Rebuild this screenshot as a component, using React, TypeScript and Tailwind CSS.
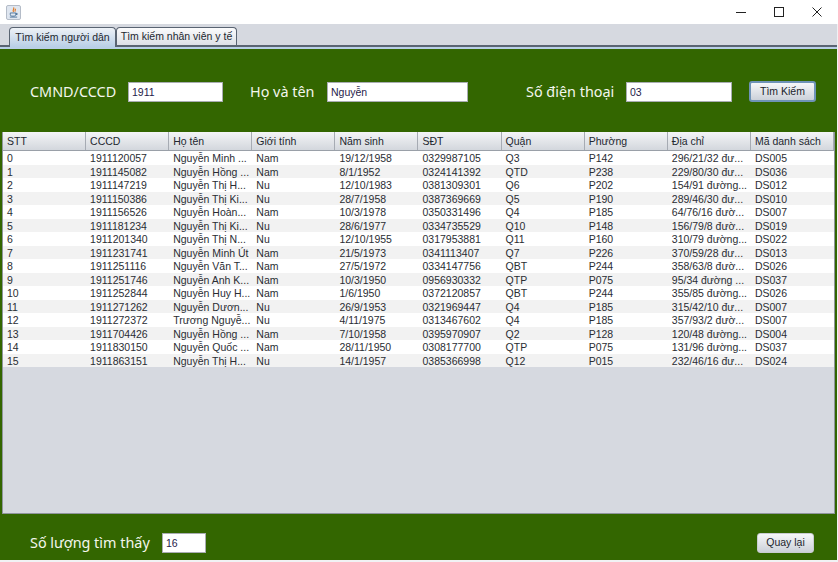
const headers = ["STT","CCCD","Họ tên","Giới tính","Năm sinh","SĐT","Quận","Phường","Địa chỉ","Mã danh sách"];
const rows = [
["0","1911120057","Nguyễn Minh ...","Nam","19/12/1958","0329987105","Q3","P142","296/21/32 đư...","DS005"],
["1","1911145082","Nguyễn Hồng ...","Nam","8/1/1952","0324141392","QTD","P238","229/80/30 đư...","DS036"],
["2","1911147219","Nguyễn Thị H...","Nu","12/10/1983","0381309301","Q6","P202","154/91 đường...","DS012"],
["3","1911150386","Nguyễn Thị Ki...","Nu","28/7/1958","0387369669","Q5","P190","289/46/30 đư...","DS010"],
["4","1911156526","Nguyễn Hoàn...","Nam","10/3/1978","0350331496","Q4","P185","64/76/16 đườ...","DS007"],
["5","1911181234","Nguyễn Thị Ki...","Nu","28/6/1977","0334735529","Q10","P148","156/79/8 đườ...","DS019"],
["6","1911201340","Nguyễn Thị N...","Nu","12/10/1955","0317953881","Q11","P160","310/79 đường...","DS022"],
["7","1911231741","Nguyễn Minh Út","Nam","21/5/1973","0341113407","Q7","P226","370/59/28 đư...","DS013"],
["8","1911251116","Nguyễn Văn T...","Nam","27/5/1972","0334147756","QBT","P244","358/63/8 đườ...","DS026"],
["9","1911251746","Nguyễn Anh K...","Nam","10/3/1950","0956930332","QTP","P075","95/34 đường ...","DS037"],
["10","1911252844","Nguyễn Huy H...","Nam","1/6/1950","0372120857","QBT","P244","355/85 đường...","DS026"],
["11","1911271262","Nguyễn Dươn...","Nu","26/9/1953","0321969447","Q4","P185","315/42/10 đư...","DS007"],
["12","1911272372","Trương Nguyễ...","Nu","4/11/1975","0313467602","Q4","P185","357/93/2 đườ...","DS007"],
["13","1911704426","Nguyễn Hồng ...","Nam","7/10/1958","0395970907","Q2","P128","120/48 đường...","DS004"],
["14","1911830150","Nguyễn Quốc ...","Nam","28/11/1950","0308177700","QTP","P075","131/96 đường...","DS037"],
["15","1911863151","Nguyễn Thị H...","Nu","14/1/1957","0385366998","Q12","P015","232/46/16 đư...","DS024"],
];

const label = "font-['Noto_Sans',sans-serif] text-[14.4px] leading-5 text-[#f4f7ee] whitespace-nowrap";
const input = "h-[20px] bg-white border border-[#a9adb3] px-[3px] font-['Liberation_Sans',sans-serif] text-[10.5px] leading-[18px] text-[#26224a]";
const btn = "font-['Liberation_Sans',sans-serif] text-[10.5px] text-[#20242c] bg-gradient-to-b from-[#f6f7f9] to-[#ccd1d9] rounded-[3px] flex items-center justify-center";

export default function App() {
  return (
    <div className="w-[838px] h-[562px] bg-[#f1f2f4] overflow-hidden flex flex-col font-['Liberation_Sans',sans-serif]">
      <div className="h-[24px] bg-white flex items-center justify-between shrink-0">
        <div className="ml-[6px] w-[15px] h-[15px] bg-[#dfe6f0] border border-[#b4bcc8] rounded-[2px] flex items-center justify-center">
          <svg width="11" height="11" viewBox="0 0 12 12">
            <path d="M6 .500c1.500 1.500-1.500 2.500 0 5M8 2c.5 1-1 2 0 3" stroke="#e07a28" strokeWidth="1.300" fill="none" />
            <path d="M2.500 6.500h6v2c0 1-1 1.500-3 1.500s-3-.5-3-1.500zM8.500 7h1.500v1.200h-1.500M2 11h8" stroke="#4a7299" strokeWidth="1" fill="none" />
          </svg>
        </div>
        <div className="flex items-center mr-[2px]">
          <div className="w-[38px] h-[24px] flex items-center justify-center">
            <svg width="10" height="10" viewBox="0 0 10 10"><path d="M0 5.500h10" stroke="#222" strokeWidth="1" /></svg>
          </div>
          <div className="w-[38px] h-[24px] flex items-center justify-center">
            <svg width="10" height="10" viewBox="0 0 10 10"><rect x=".5" y=".5" width="9" height="9" stroke="#222" fill="none" /></svg>
          </div>
          <div className="w-[38px] h-[24px] flex items-center justify-center">
            <svg width="10" height="10" viewBox="0 0 10 10"><path d="M.5.500l9 9M9.500.500l-9 9" stroke="#222" strokeWidth="1" /></svg>
          </div>
        </div>
      </div>

      <div className="shrink-0 border-b-2 border-b-[#b9cfe6] w-[837px]">
        <div className="h-[23px] bg-[#d6d9e0] flex items-end pl-[9px] border-b-2 border-b-[#5a6472]">
          <div className="h-[20px] w-[107px] mb-[-2px] bg-gradient-to-b from-[#eef2f7] to-[#b9cfe6] border border-[#5a6472] border-b-0 rounded-t-[4px] text-[10.5px] text-[#23272f] flex items-center justify-center whitespace-nowrap relative z-10">Tìm kiếm người dân</div>
          <div className="h-[18px] w-[121px] bg-gradient-to-b from-[#fbfbfc] to-[#dde0e6] border border-[#5a6472] border-b-0 rounded-t-[4px] text-[10.5px] text-[#23272f] flex items-center justify-center whitespace-nowrap">Tìm kiếm nhân viên y tế</div>
        </div>
      </div>

      <div className="w-[837px] h-[511px] bg-[#336600] flex flex-col shrink-0">
        <div className="h-[83px] flex items-center pl-[30px] pt-[2px] shrink-0">
          <span className={`${label} w-[98px]`}>CMND/CCCD</span>
          <div className={`${input} w-[95px]`}>1911</div>
          <span className={`${label} ml-[27px] w-[77px]`}>Họ và tên</span>
          <div className={`${input} w-[141px]`}>Nguyễn</div>
          <span className={`${label} ml-[58px] w-[100px]`}>Số điện thoại</span>
          <div className={`${input} w-[106px]`}>03</div>
          <button className={`${btn} ml-[17px] w-[67px] h-[21px] border-2 border-[#6f93b8]`}>Tìm Kiếm</button>
        </div>

        <div className="mx-[2px] w-[833px] h-[382px] bg-[#d6d9e0] border border-[#8f959c] border-t-0 shrink-0 flex flex-col">
          <div className="grid grid-cols-10 h-[19px] bg-gradient-to-b from-[#f4f5f7] to-[#d3d7dd] border-b border-[#9aa0a8]">
            {headers.map((h) => (
              <div key={h} className="pl-[4px] text-[10.5px] leading-[18px] text-[#23272f] border-r border-[#a6abb3] whitespace-nowrap overflow-hidden">{h}</div>
            ))}
          </div>
          {rows.map((r, i) => (
            <div key={r[0]} className={`grid grid-cols-10 h-[13.5px] ${i % 2 === 0 ? "bg-white" : "bg-[#f2f2f2]"}`}>
              {r.map((c, j) => (
                <div key={j} className="pl-[4px] pt-[1px] text-[10.5px] leading-[13.5px] text-[#2a2d33] whitespace-nowrap overflow-hidden">{c}</div>
              ))}
            </div>
          ))}
        </div>

        <div className="flex-1 flex items-center pl-[30px] pr-[23px] pt-[12px]">
          <span className={`${label} w-[132px]`}>Số lượng tìm thấy</span>
          <div className={`${input} w-[44px]`}>16</div>
          <button className={`${btn} ml-auto w-[57px] h-[20px] border border-[#c9ccd2]`}>Quay lại</button>
        </div>
      </div>
    </div>
  );
}
